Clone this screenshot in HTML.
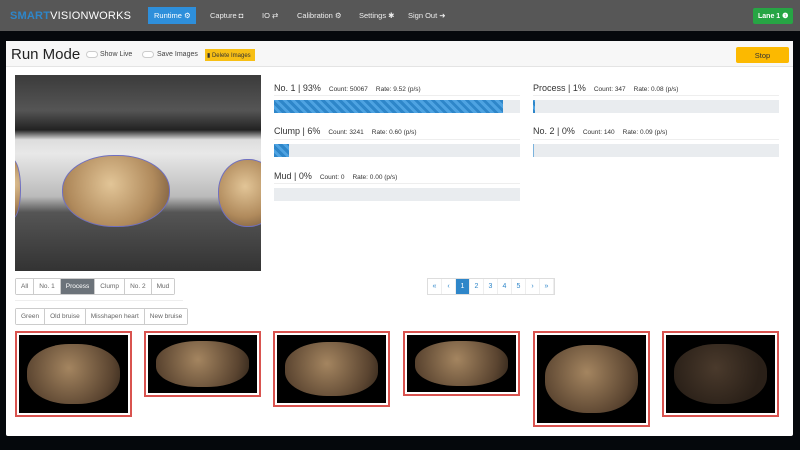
<!DOCTYPE html>
<html><head><style>
*{box-sizing:border-box;margin:0;padding:0}
body{width:800px;height:450px;background:#05080c;font-family:"Liberation Sans",sans-serif;position:relative;overflow:hidden}
div,span{white-space:nowrap}
.nav{position:absolute;left:0;top:0;width:800px;height:31px;background:#575757}
.logo{position:absolute;left:10px;top:10px;font-size:11px;letter-spacing:.2px;color:#fff}
.logo b{color:#2e86c9;font-weight:bold}
.ni{position:absolute;top:11px;font-size:7.5px;color:#eee}
.act{position:absolute;left:148px;top:7px;width:48px;height:17px;background:#2e8fdb;color:#fff;font-size:7.5px;padding:4px 6px}
.lane{position:absolute;left:753px;top:8px;width:40px;height:16px;background:#27a544;color:#fff;font-size:7px;font-weight:bold;padding:4px 5px;border-radius:2px}
.panel{position:absolute;left:6px;top:41px;width:787px;height:395px;background:#fff;border-radius:2px}
.hdr{position:absolute;left:0;top:0;width:787px;height:26px;background:#f7f7f7;border-bottom:1px solid #e4e4e4}
.title{position:absolute;left:5px;top:5px;font-size:15px;color:#222}
.tog{position:absolute;top:10px;width:12px;height:7px;border:1px solid #ccc;border-radius:4px;background:#fff}
.tl{position:absolute;top:10px;font-size:7px;color:#444}
.del{position:absolute;left:199px;top:8px;width:50px;height:12px;background:#f7bf14;font-size:6px;color:#333;padding:3px 2px}
.stop{position:absolute;left:730px;top:6px;width:53px;height:16px;background:#fcb900;font-size:7.5px;color:#333;text-align:center;padding-top:4px;border-radius:2px}
.cam{position:absolute;left:9px;top:34px;width:246px;height:196px;overflow:hidden;background:linear-gradient(#3b3b3b 0,#555 18%,#222 28%,#ddd 33%,#e8e8e8 40%,#bbb 62%,#555 70%,#333 100%)}
.pot{position:absolute;border-radius:48%;background:radial-gradient(circle at 45% 40%,#e2c597,#b08a5c 60%,#6d5238);border:1px solid #7070c0}
.st{position:absolute;font-size:9px;color:#333}
.st small{font-size:6.5px;margin-left:8px}
.ln{position:absolute;height:1px;background:#eee}
.bar{position:absolute;height:13px;background:#e9ecef}
.fill{height:13px;background:repeating-linear-gradient(45deg,#2e86c9 0 3px,#4ea3e2 3px 6px)}
.grp{position:absolute;display:flex;border:1px solid #ccc;border-radius:2px}
.grp span{font-size:6.5px;color:#666;padding:4px 5px;border-right:1px solid #ccc;background:#fff}
.grp span:last-child{border-right:none}
.grp .on{background:#6c737a;color:#fff}
.pg{position:absolute;left:421px;top:237px;display:flex;border:1px solid #ddd}
.pg span{width:14px;height:15px;font-size:7px;color:#2e86c9;text-align:center;line-height:15px;border-right:1px solid #eee}
.pg .on{background:#2e86c9;color:#fff}
.th{position:absolute;border:2px solid #d9534f;background:#fff;padding:2px}
.th div{width:100%;height:100%;background:#000;display:flex;align-items:center;justify-content:center}
.th i{display:block;width:86%;height:78%;border-radius:45%;background:radial-gradient(circle at 45% 40%,#a48560,#5a4430 70%,#2d2218)}
</style></head><body>
<div class="nav">
<div class="logo"><b>SMART</b>VISIONWORKS</div>
<div class="act">Runtime ⚙</div>
<div class="ni" style="left:210px">Capture ◘</div>
<div class="ni" style="left:262px">IO ⇄</div>
<div class="ni" style="left:297px">Calibration ⚙</div>
<div class="ni" style="left:359px">Settings ✱</div>
<div class="ni" style="left:408px">Sign Out ➜</div>
<div class="lane">Lane 1 ❶</div>
</div>
<div class="panel">
<div class="hdr">
<div class="title">Run Mode</div>
<div class="tog" style="left:80px"></div><div class="tl" style="left:94px">Show Live</div>
<div class="tog" style="left:136px"></div><div class="tl" style="left:151px">Save Images</div>
<div class="del">▮ Delete Images</div>
<div class="stop">Stop</div>
</div>
<div class="cam">
<div class="pot" style="left:47px;top:80px;width:108px;height:72px"></div>
<div class="pot" style="left:203px;top:84px;width:60px;height:68px"></div>
<div class="pot" style="left:-12px;top:84px;width:18px;height:60px"></div>
</div>
<div class="st" style="left:268px;top:42px">No. 1 | 93%<small>Count: 50067</small><small>Rate: 9.52 (p/s)</small></div>
<div class="ln" style="left:268px;top:54px;width:246px"></div>
<div class="bar" style="left:268px;top:59px;width:246px"><div class="fill" style="width:93%"></div></div>
<div class="st" style="left:268px;top:85px">Clump | 6%<small>Count: 3241</small><small>Rate: 0.60 (p/s)</small></div>
<div class="ln" style="left:268px;top:98px;width:246px"></div>
<div class="bar" style="left:268px;top:103px;width:246px"><div class="fill" style="width:6%"></div></div>
<div class="st" style="left:268px;top:130px">Mud | 0%<small>Count: 0</small><small>Rate: 0.00 (p/s)</small></div>
<div class="ln" style="left:268px;top:142px;width:246px"></div>
<div class="bar" style="left:268px;top:147px;width:246px"></div>
<div class="st" style="left:527px;top:42px">Process | 1%<small>Count: 347</small><small>Rate: 0.08 (p/s)</small></div>
<div class="ln" style="left:527px;top:54px;width:246px"></div>
<div class="bar" style="left:527px;top:59px;width:246px"><div class="fill" style="width:1%"></div></div>
<div class="st" style="left:527px;top:85px">No. 2 | 0%<small>Count: 140</small><small>Rate: 0.09 (p/s)</small></div>
<div class="ln" style="left:527px;top:98px;width:246px"></div>
<div class="bar" style="left:527px;top:103px;width:246px"><div class="fill" style="width:0.6%;background:#7bb3dd"></div></div>
<div class="grp" style="left:9px;top:237px"><span>All</span><span>No. 1</span><span class="on">Process</span><span>Clump</span><span>No. 2</span><span>Mud</span></div>
<div class="ln" style="left:9px;top:259px;width:168px"></div>
<div class="grp" style="left:9px;top:267px"><span>Green</span><span>Old bruise</span><span>Misshapen heart</span><span>New bruise</span></div>
<div class="pg"><span>«</span><span>‹</span><span class="on">1</span><span>2</span><span>3</span><span>4</span><span>5</span><span>›</span><span>»</span></div>
<div class="th" style="left:9px;top:290px;width:117px;height:86px"><div><i></i></div></div>
<div class="th" style="left:138px;top:290px;width:117px;height:66px"><div><i></i></div></div>
<div class="th" style="left:267px;top:290px;width:117px;height:76px"><div><i></i></div></div>
<div class="th" style="left:397px;top:290px;width:117px;height:65px"><div><i></i></div></div>
<div class="th" style="left:527px;top:290px;width:117px;height:96px"><div><i></i></div></div>
<div class="th" style="left:656px;top:290px;width:117px;height:86px"><div><i style="background:radial-gradient(circle at 45% 40%,#4a3a2c,#2a2018 70%)"></i></div></div>
</div>
</body></html>
